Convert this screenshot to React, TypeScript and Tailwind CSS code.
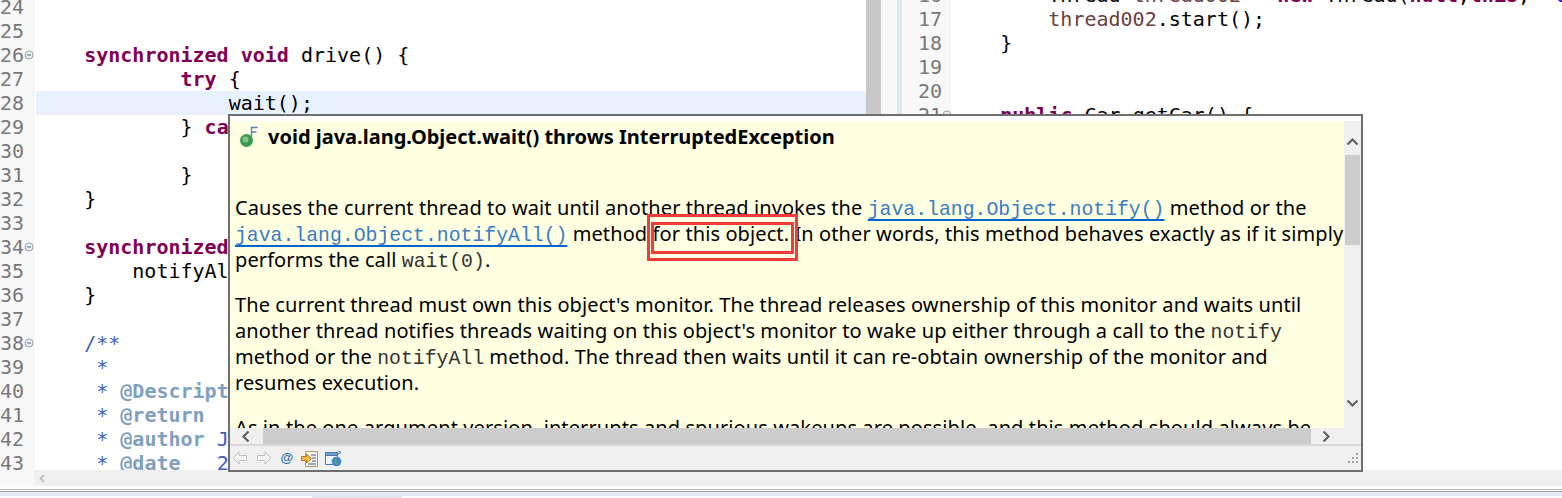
import { FC, ReactNode } from 'react';

const kw = 'font-bold text-[#7f0055]';
const doc = 'text-[#3f5fbf]';
const tag = 'font-bold text-[#7f9fbf]';

type Line = { n: number; code?: ReactNode; fold?: boolean };

const leftLines: Line[] = [
  { n: 24 },
  { n: 25 },
  { n: 26, fold: true, code: <>    <span className={kw}>synchronized</span> <span className={kw}>void</span> drive() {'{'}</> },
  { n: 27, code: <>            <span className={kw}>try</span> {'{'}</> },
  { n: 28, code: <>                wait();</> },
  { n: 29, code: <>            {'}'} <span className={kw}>catch</span> (InterruptedException e) {'{'}</> },
  { n: 30 },
  { n: 31, code: <>            {'}'}</> },
  { n: 32, code: <>    {'}'}</> },
  { n: 33 },
  { n: 34, fold: true, code: <>    <span className={kw}>synchronized</span> <span className={kw}>void</span> wake() {'{'}</> },
  { n: 35, code: <>        notifyAll();</> },
  { n: 36, code: <>    {'}'}</> },
  { n: 37 },
  { n: 38, fold: true, code: <span className={doc}>    /**</span> },
  { n: 39, code: <span className={doc}>     *</span> },
  { n: 40, code: <><span className={doc}>     * </span><span className={tag}>@Description</span></> },
  { n: 41, code: <><span className={doc}>     * </span><span className={tag}>@return</span></> },
  { n: 42, code: <><span className={doc}>     * </span><span className={tag}>@author</span><span className={doc}> J</span></> },
  { n: 43, code: <><span className={doc}>     * </span><span className={tag}>@date</span><span className={doc}>   2</span></> },
];

const rightLines: Line[] = [
  { n: 16, code: <>        Thread <span className="text-[#6a3e3e]">thread002</span> = <span className={kw}>new</span> Thread(<span className={kw}>null</span>,<span className={kw}>this</span>, <span className="text-[#2a00ff]">"t</span></> },
  { n: 17, code: <>        <span className="text-[#6a3e3e]">thread002</span>.start();</> },
  { n: 18, code: <>    {'}'}</> },
  { n: 19 },
  { n: 20 },
  { n: 21, fold: true, code: <>    <span className={kw}>public</span> Car getCar() {'{'}</> },
];

const FoldMark = () => (
  <svg width="10" height="10" viewBox="0 0 10 10" className="shrink-0">
    <circle cx="5" cy="5" r="4" fill="#e8eef2" stroke="#9aa8b4" />
    <path d="M3 5h4" stroke="#5a6a78" />
  </svg>
);

const CodeRow: FC<{ line: Line; active?: boolean }> = ({ line, active }) => (
  <div className="flex h-6 leading-6">
    <div className="w-[34px] shrink-0 flex items-center text-[#787878] bg-[#f8f8f8] border-r border-[#eeeeee]">
      <span>{line.n}</span>
      {line.fold && <FoldMark />}
    </div>
    <pre className={`flex-1 ml-[2px] font-[inherit] whitespace-pre overflow-hidden ${active ? 'bg-[#e8f2fe]' : ''}`}>{line.code || ' '}</pre>
  </div>
);

const Chevron: FC<{ dir: 'up' | 'down' | 'left' | 'right' }> = ({ dir }) => {
  const d = {
    up: 'M1.5 8.5l5-5 5 5',
    down: 'M1.5 4.5l5 5 5-5',
    left: 'M8.5 1.5l-5 5 5 5',
    right: 'M4.5 1.5l5 5-5 5',
  }[dir];
  return (
    <svg width="13" height="13" viewBox="0 0 13 13" fill="none">
      <path d={d} stroke="#606060" strokeWidth="2.2" />
    </svg>
  );
};

const Mono: FC<{ children: ReactNode }> = ({ children }) => (
  <span className="font-['Liberation_Mono',monospace] text-[19.8px] tracking-normal leading-none text-[#333333]">{children}</span>
);

const Link: FC<{ children: ReactNode }> = ({ children }) => (
  <span className="font-['Liberation_Mono',monospace] text-[19.8px] tracking-normal leading-none text-[#3a7cc4] underline decoration-[#0066cc] decoration-2 underline-offset-[4px]">{children}</span>
);

const MethodIcon = () => (
  <svg width="20" height="22" viewBox="0 0 20 22" className="shrink-0">
    <circle cx="7.5" cy="14.5" r="6.5" fill="#3f9a4f" />
    <circle cx="6.5" cy="13.5" r="3" fill="#7cc88a" />
    <path d="M12.5 11V1.5h6M12.5 6h5" fill="none" stroke="#4a7fc0" strokeWidth="1.3" />
  </svg>
);

const ToolbarIcons = () => (
  <div className="flex items-center h-6 pl-[2px]">
    <svg width="16" height="16" viewBox="0 0 16 16" fill="#f4f4f4" stroke="#c0c0c0">
      <path d="M1 8l6-6v3.5h7.5v5H7V14z" />
    </svg>
    <svg width="16" height="16" viewBox="0 0 16 16" fill="#f4f4f4" stroke="#c0c0c0" className="ml-2">
      <path d="M15 8L9 2v3.5H1.5v5H9V14z" />
    </svg>
    <span className="w-4 ml-[7px] text-center text-[13px] leading-4 font-bold text-[#2a6fb0] font-['Liberation_Sans',sans-serif]">@</span>
    <svg width="17" height="17" viewBox="0 0 17 17" className="ml-[6px]">
      <path d="M4.5 1.5h12v15h-12z" fill="#f6f3ea" stroke="#b09a6a" />
      <path d="M10 5h5M11 8h4M11 11h4M7 14h8" stroke="#3a5f9a" />
      <path d="M.5 6.5h5V4l5 4.5-5 4.5v-2.5h-5z" fill="#f2b84a" stroke="#b07a18" />
    </svg>
    <svg width="17" height="17" viewBox="0 0 17 17" className="ml-[7px]">
      <path d="M.5 2.5h12v12H.5z" fill="#eef4fb" stroke="#4a78a8" />
      <path d="M.5 2.5h12v3H.5z" fill="#6f9fd0" stroke="#4a78a8" />
      <circle cx="11.5" cy="11.5" r="4.8" fill="#3f88c8" />
      <path d="M9 9.5c2-1 3 .5 2.5 2s1 3-.5 3.5z" fill="#6aa84f" />
      <path d="M13 1l3 1.5-3 1.5" fill="none" stroke="#4a78a8" />
    </svg>
  </div>
);

const Popup = () => (
  <div className="absolute left-[228px] top-[114px] w-[1135px] h-[358px] border-2 border-[#6f6f6f] bg-[#f0f0f0] flex flex-col font-['Noto_Sans',sans-serif] text-[20px] leading-[26px] tracking-[0.1px] text-black">
    <div className="h-[5px] shrink-0 bg-white" />
    <div className="flex flex-1 min-h-0">
      <div className="flex-1 min-w-0 bg-[#ffffe1] overflow-hidden whitespace-nowrap relative">
        <div className="flex items-center h-8 pl-[9px] gap-[9px] font-bold tracking-normal">
          <MethodIcon />
          <span>void java.lang.Object.wait() throws InterruptedException</span>
        </div>
        <div className="pl-[5px] pt-[42px]">
          <p>Causes the current thread to wait until another thread invokes the <Link>java.lang.Object.notify()</Link> method or the</p>
          <p><Link>java.lang.Object.notifyAll()</Link> method for this object. In other words, this method behaves exactly as if it simply</p>
          <p>performs the call <Mono>wait(0)</Mono>.</p>
          <p className="mt-[19px]">The current thread must own this object's monitor. The thread releases ownership of this monitor and waits until</p>
          <p>another thread notifies threads waiting on this object's monitor to wake up either through a call to the <Mono>notify</Mono></p>
          <p>method or the <Mono>notifyAll</Mono> method. The thread then waits until it can re-obtain ownership of the monitor and</p>
          <p>resumes execution.</p>
          <p className="mt-[19px]">As in the one argument version, interrupts and spurious wakeups are possible, and this method should always be</p>
        </div>
        <div className="absolute left-[417px] top-[93px] w-[151px] h-[47px] border-[3px] border-[#f23c3c]" />
        <div className="absolute left-[421px] top-[101px] w-[143px] h-[32px] border-[3px] border-[#f23c3c]" />
      </div>
      <div className="w-[17px] shrink-0 flex flex-col">
        <div className="h-[34px] flex items-end justify-center pb-[6px]"><Chevron dir="up" /></div>
        <div className="flex-1">
          <div className="h-[90px] bg-[#cdcdcd] mx-[1px]" />
        </div>
        <div className="h-[32px] flex items-start justify-center"><Chevron dir="down" /></div>
      </div>
    </div>
    <div className="h-4 flex shrink-0 items-center">
      <div className="w-[33px] flex justify-center"><Chevron dir="left" /></div>
      <div className="w-[1048px] h-4 bg-[#cdcdcd]" />
      <div className="w-[28px] flex justify-center"><Chevron dir="right" /></div>
    </div>
    <div className="border-t-2 border-[#d8d8d8] h-[26px] shrink-0 flex items-center justify-between pr-[2px]">
      <ToolbarIcons />
      <svg width="11" height="11" viewBox="0 0 11 11" fill="#a0a0a0">
        <rect x="8" y="0" width="2" height="2" />
        <rect x="4" y="4" width="2" height="2" />
        <rect x="8" y="4" width="2" height="2" />
        <rect x="0" y="8" width="2" height="2" />
        <rect x="4" y="8" width="2" height="2" />
        <rect x="8" y="8" width="2" height="2" />
      </svg>
    </div>
  </div>
);

export default function App() {
  return (
    <div className="relative w-[1562px] h-[498px] overflow-hidden bg-white flex flex-col">
      <div className="h-[470px] shrink-0 flex overflow-hidden font-['DejaVu_Sans_Mono',monospace] text-[20px] text-black">
        <div className="w-[866px] shrink-0 -mt-[5px]">
          {leftLines.map((line) => (
            <CodeRow key={line.n} line={line} active={line.n === 28} />
          ))}
        </div>
        <div className="w-[15px] shrink-0 bg-[#c8c8c8]" />
        <div className="w-[16px] shrink-0 bg-[#f8f8f8]" />
        <div className="w-[5px] shrink-0 bg-[#dfe6f5]" />
        <div className="flex-1 -mt-[17px]">
          {rightLines.map((line) => (
            <div key={line.n} className="flex h-6 leading-6">
              <div className="w-[48px] shrink-0 pl-[16px] flex items-center text-[#787878] bg-[#f8f8f8] border-r border-[#eeeeee]">
                <span>{line.n}</span>
                {line.fold && <FoldMark />}
              </div>
              <pre className="flex-1 ml-[2px] font-[inherit] whitespace-pre">{line.code || ' '}</pre>
            </div>
          ))}
        </div>
      </div>
      <div className="h-4 shrink-0 flex">
        <div className="w-[34px] bg-[#f8f8f8]" />
        <div className="flex-1 bg-[#f0f0f0] flex items-center pl-[2px]">
          <svg width="13" height="13" viewBox="0 0 13 13" fill="none">
            <path d="M8 3L4.5 6.5 8 10" stroke="#c0c0c0" strokeWidth="2" />
          </svg>
        </div>
      </div>
      <div className="h-[3px] shrink-0 bg-white" />
      <div className="h-px shrink-0 bg-[#c0c0c0]" />
      <div className="h-px shrink-0 bg-white" />
      <div className="h-px shrink-0 bg-[#a0a0a0]" />
      <div className="h-1 shrink-0 bg-[#e1e8f6]" />
      <div className="h-[2px] shrink-0 flex">
        <div className="ml-[312px] w-[90px] bg-[#e1e4ee]" />
      </div>
      <Popup />
    </div>
  );
}
